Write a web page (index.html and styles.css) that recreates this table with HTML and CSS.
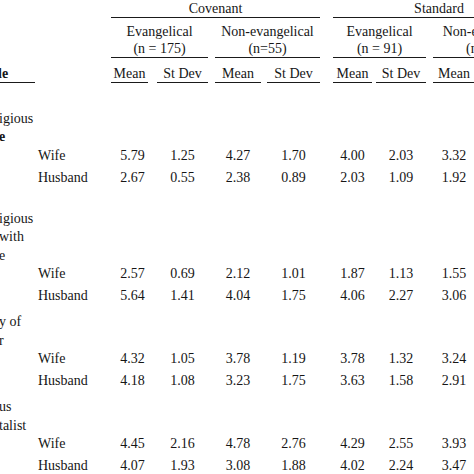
FILE: index.html
```html
<!DOCTYPE html>
<html>
<head>
<meta charset="utf-8">
<title>Table</title>
<link rel="stylesheet" href="styles.css">
</head>
<body>
<div class="sheet">
  <div class="tbl">
    <div class="blank lead"></div>
    <div class="h1 covenant">Covenant</div>
    <div class="h1 standard">Standard</div>

    <div class="blank lead"></div>
    <div class="h2 cov-ev">Evangelical<br>(n = 175)</div>
    <div class="h2 cov-non">Non-evangelical<br>(n=55)</div>
    <div class="h2 std-ev">Evangelical<br>(n = 91)</div>
    <div class="h2 std-non">Non-evangelical<br><span class="cut">(n</span></div>

    <div class="h3 var">le</div>
    <div class="h3 blank"></div>
    <div class="h3 stat c3">Mean</div>
    <div class="h3 stat c4">St Dev</div>
    <div class="h3 stat c5">Mean</div>
    <div class="h3 stat c6">St Dev</div>
    <div class="h3 stat c7">Mean</div>
    <div class="h3 stat c8">St Dev</div>
    <div class="h3 stat c9">Mean</div>
    <div class="h3 stat c10">St Dev</div>

    <div class="gap-top"></div>

    <div class="lab">igious</div>
    <div class="lab bold">e</div>
    <div class="who wife">Wife</div>
    <div class="num c3 first">5.79</div><div class="num c4">1.25</div><div class="num c5">4.27</div><div class="num c6">1.70</div><div class="num c7">4.00</div><div class="num c8">2.03</div><div class="num c9">3.32</div>
    <div class="who husb">Husband</div>
    <div class="num c3 first">2.67</div><div class="num c4">0.55</div><div class="num c5">2.38</div><div class="num c6">0.89</div><div class="num c7">2.03</div><div class="num c8">1.09</div><div class="num c9">1.92</div>

    <div class="gap-sec"></div>

    <div class="lab">igious</div>
    <div class="lab">with</div>
    <div class="lab">e</div>
    <div class="who wife">Wife</div>
    <div class="num c3 first">2.57</div><div class="num c4">0.69</div><div class="num c5">2.12</div><div class="num c6">1.01</div><div class="num c7">1.87</div><div class="num c8">1.13</div><div class="num c9">1.55</div>
    <div class="who husb">Husband</div>
    <div class="num c3 first">5.64</div><div class="num c4">1.41</div><div class="num c5">4.04</div><div class="num c6">1.75</div><div class="num c7">4.06</div><div class="num c8">2.27</div><div class="num c9">3.06</div>

    <div class="lab">y of</div>
    <div class="lab">r</div>
    <div class="who wife">Wife</div>
    <div class="num c3 first">4.32</div><div class="num c4">1.05</div><div class="num c5">3.78</div><div class="num c6">1.19</div><div class="num c7">3.78</div><div class="num c8">1.32</div><div class="num c9">3.24</div>
    <div class="who husb">Husband</div>
    <div class="num c3 first">4.18</div><div class="num c4">1.08</div><div class="num c5">3.23</div><div class="num c6">1.75</div><div class="num c7">3.63</div><div class="num c8">1.58</div><div class="num c9">2.91</div>

    <div class="lab">us</div>
    <div class="lab">talist</div>
    <div class="who wife">Wife</div>
    <div class="num c3 first">4.45</div><div class="num c4">2.16</div><div class="num c5">4.78</div><div class="num c6">2.76</div><div class="num c7">4.29</div><div class="num c8">2.55</div><div class="num c9">3.93</div>
    <div class="who husb">Husband</div>
    <div class="num c3 first">4.07</div><div class="num c4">1.93</div><div class="num c5">3.08</div><div class="num c6">1.88</div><div class="num c7">4.02</div><div class="num c8">2.24</div><div class="num c9">3.47</div>
  </div>
</div>
</body>
</html>
```

FILE: styles.css
```css
html, body {
  margin: 0;
  padding: 0;
  background: #ffffff;
  overflow: hidden;
}

.sheet {
  width: 474px;
  height: 474px;
  overflow: hidden;
  font-family: "Liberation Serif", "Times New Roman", serif;
  font-size: 14px;
  line-height: 17px;
  color: #161616;
}

.tbl {
  display: grid;
  grid-template-columns: 95px 76px 46px 58px 52px 66px 43px 57px 49px 70px;
  width: 612px;
  margin-left: -60px;
}

.lead { grid-column: 1 / span 2; }

.h1 {
  text-align: center;
  border-bottom: 1px solid #1a1a1a;
  white-space: nowrap;
}
.covenant { grid-column: 3 / span 4; margin-right: 13px; }
.standard { grid-column: 7 / span 4; margin-right: 7px; }

.h2 {
  padding-top: 5px;
  text-align: center;
  border-bottom: 1px solid #1a1a1a;
  white-space: nowrap;
}
.cov-ev { grid-column: 3 / span 2; margin-right: 7px; }
.cov-non { grid-column: 5 / span 2; margin-right: 13px; }
.std-ev { grid-column: 7 / span 2; margin-right: 7px; }
.std-non { grid-column: 9 / span 2; margin-right: 7px; }
.cut {
  display: block;
  text-align: left;
  padding-left: 33px;
}

.h3 {
  padding-top: 7px;
  white-space: nowrap;
}
.var {
  grid-column: 1;
  padding-left: 58px;
  font-weight: bold;
  border-bottom: 1px solid #1a1a1a;
}
.stat {
  text-align: center;
  border-bottom: 1px solid #1a1a1a;
}

.c3 { margin-right: 9px; }
.c4 { margin-right: 7px; }
.c5 { margin-right: 6px; }
.c6 { margin-right: 13px; }
.c7 { margin-right: 4px; }
.c8 { margin-right: 7px; }
.c9 { margin-right: 7px; }
.c10 { margin-right: 7px; }

.gap-top { grid-column: 1 / -1; height: 26.5px; }
.gap-sec { grid-column: 1 / -1; height: 15px; }

.lab {
  grid-column: 1 / -1;
  height: 18.5px;
  padding-left: 59px;
  white-space: nowrap;
}
.bold { font-weight: bold; }

.who {
  grid-column: 2;
  padding-left: 3px;
  white-space: nowrap;
}
.wife { height: 22px; }
.husb { height: 26px; }

.num {
  text-align: center;
  white-space: nowrap;
}
.num.first { padding-left: 6px; }
```
